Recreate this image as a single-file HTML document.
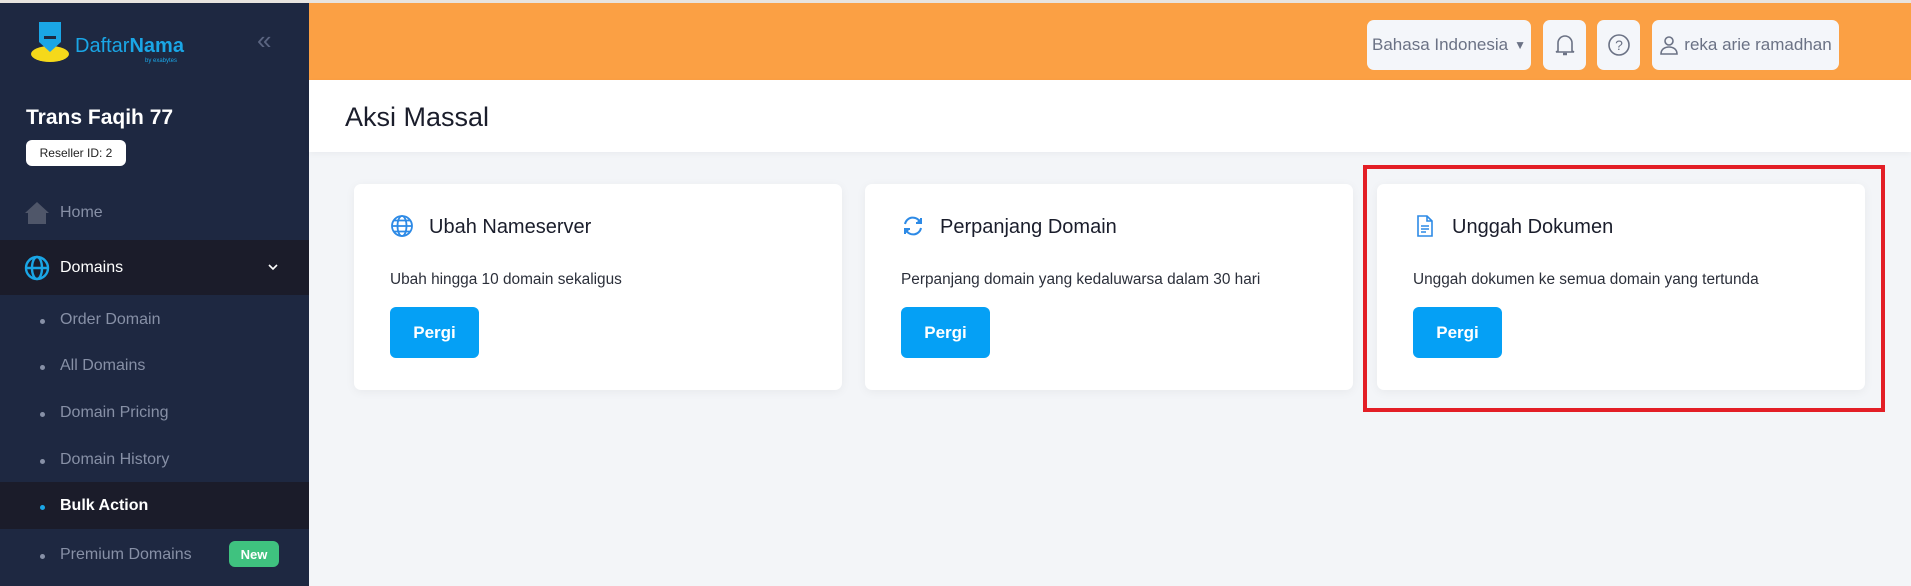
<!DOCTYPE html>
<html><head><meta charset="utf-8"><style>
*{box-sizing:border-box;margin:0;padding:0}
body{width:1911px;height:586px;overflow:hidden;font-family:"Liberation Sans",sans-serif;background:#f3f5f8;position:relative}
.topline{position:absolute;left:0;top:0;width:1911px;height:3px;background:#e8e4df}
.sb{position:absolute;left:0;top:3px;width:309px;height:583px;background:#1e2841}
.hdr{position:absolute;left:309px;top:3px;width:1602px;height:77px;background:#fba044}
.tbar{position:absolute;left:309px;top:80px;width:1602px;height:72px;background:#fff;box-shadow:0 2px 6px rgba(0,0,0,.04)}
.tbar h1{position:absolute;left:36px;top:22px;font-size:27px;font-weight:normal;color:#1a1d2b}
.hb{position:absolute;top:17px;height:50px;background:#f4f6fa;border-radius:7px;color:#6b7285;font-size:17px;display:flex;align-items:center;justify-content:center;white-space:nowrap}
.card{position:absolute;top:184px;width:488px;height:206px;background:#fff;border-radius:7px;box-shadow:0 2px 10px rgba(0,0,0,.05)}
.card .ic{position:absolute;left:36px;top:30px}
.card h3{position:absolute;left:75px;top:32px;font-size:20px;font-weight:normal;color:#1a1d2b;white-space:nowrap}
.card p{position:absolute;left:36px;top:87px;font-size:15.4px;color:#2b2f3a;white-space:nowrap}
.card .btn{position:absolute;left:36px;top:123px;width:89px;height:51px;background:#05a0f5;border-radius:6px;color:#fff;font-weight:bold;font-size:17px;display:flex;align-items:center;justify-content:center}
.red{position:absolute;left:1363px;top:165px;width:522px;height:247px;border:4px solid #e31e26}
.nav{position:absolute;left:0;width:309px;font-size:16px;color:#8790a6}
.sub{position:absolute;left:60px;font-size:16px;color:#8790a6}
.dot{position:absolute;left:40px;width:5px;height:5px;border-radius:50%;background:#8790a6}
</style></head><body>
<div class="topline"></div>
<div class="sb">
  <svg style="position:absolute;left:30px;top:17px" width="42" height="44" viewBox="0 0 42 44"><ellipse cx="20" cy="34" rx="19" ry="8" fill="#f5d91a"/><path d="M9 2h22v20l-11 10-11-10z" fill="#1aa6e6"/><rect x="14" y="16" width="12" height="3" fill="#1e2841"/></svg>
  <div style="position:absolute;left:75px;top:32px;font-size:20px;color:#1aa6e6;white-space:nowrap">Daftar<b>Nama</b></div>
  <div style="position:absolute;left:145px;top:55px;font-size:6px;color:#1aa6e6">by exabytes</div>
  <div style="position:absolute;left:257px;top:22px;font-size:26px;color:#5a6480">«</div>
  <div style="position:absolute;left:26px;top:103px;font-size:21px;font-weight:bold;color:#fff">Trans Faqih 77</div>
  <div style="position:absolute;left:26px;top:137px;width:100px;height:26px;background:#fff;border-radius:6px;font-size:12px;color:#222;display:flex;align-items:center;justify-content:center">Reseller ID: 2</div>
  <svg style="position:absolute;left:24px;top:198px" width="26" height="24" viewBox="0 0 26 24"><path d="M13 1L1 12h3v11h18V12h3z" fill="#4f5669"/></svg>
  <div class="nav" style="top:201px;left:60px">Home</div>
  <div style="position:absolute;left:0;top:237px;width:309px;height:55px;background:#1b1c2a"></div>
  <svg style="position:absolute;left:24px;top:252px" width="26" height="26" viewBox="0 0 26 26" fill="none" stroke="#1aa6e6" stroke-width="2.4"><circle cx="13" cy="13" r="11"/><ellipse cx="13" cy="13" rx="5" ry="11"/><path d="M2 13h22"/></svg>
  <div class="nav" style="top:256px;left:60px;color:#fff">Domains</div>
  <svg style="position:absolute;left:267px;top:260px" width="12" height="8" viewBox="0 0 12 8" fill="none" stroke="#fff" stroke-width="1.6"><path d="M2 2l4 4 4-4"/></svg>
  <div class="dot" style="top:316px"></div><div class="sub" style="top:308px">Order Domain</div>
  <div class="dot" style="top:362px"></div><div class="sub" style="top:354px">All Domains</div>
  <div class="dot" style="top:409px"></div><div class="sub" style="top:401px">Domain Pricing</div>
  <div class="dot" style="top:456px"></div><div class="sub" style="top:448px">Domain History</div>
  <div style="position:absolute;left:0;top:479px;width:309px;height:47px;background:#1b1c2a"></div>
  <div class="dot" style="top:502px;background:#1aa6e6"></div><div class="sub" style="top:494px;color:#fff;font-weight:bold">Bulk Action</div>
  <div class="dot" style="top:551px"></div><div class="sub" style="top:543px">Premium Domains</div>
  <div style="position:absolute;left:229px;top:538px;width:50px;height:26px;background:#3fc27f;border-radius:6px;color:#fff;font-weight:bold;font-size:13px;display:flex;align-items:center;justify-content:center">New</div>
</div>
<div class="hdr">
  <div class="hb" style="left:1058px;width:164px">Bahasa Indonesia <span style="font-size:12px;margin-left:6px">▼</span></div>
  <div class="hb" style="left:1234px;width:43px"><svg width="22" height="24" viewBox="0 0 22 24" fill="none" stroke="#6b7285" stroke-width="1.6"><path d="M4 18V10a7 7 0 0114 0v8l2 1H2z"/><path d="M9 21h4" stroke-width="2.5"/></svg></div>
  <div class="hb" style="left:1288px;width:43px"><svg width="24" height="24" viewBox="0 0 24 24" fill="none" stroke="#6b7285" stroke-width="1.6"><circle cx="12" cy="12" r="10"/><text x="12" y="17" font-size="14" text-anchor="middle" fill="#6b7285" stroke="none" font-family="Liberation Sans">?</text></svg></div>
  <div class="hb" style="left:1343px;width:187px"><svg width="20" height="20" viewBox="0 0 20 20" fill="none" stroke="#6b7285" stroke-width="1.6" style="margin-right:5px"><circle cx="10" cy="6" r="4"/><path d="M2 19c0-5 4-7 8-7s8 2 8 7z"/></svg>reka arie ramadhan</div>
</div>
<div class="tbar"><h1>Aksi Massal</h1></div>
<div class="card" style="left:354px"><svg class="ic" width="24" height="24" viewBox="0 0 24 24" fill="none" stroke="#2d8ae6" stroke-width="1.8"><circle cx="12" cy="12" r="10"/><ellipse cx="12" cy="12" rx="4.5" ry="10"/><path d="M2 12h20M4 6.5h16M4 17.5h16"/></svg><h3>Ubah Nameserver</h3><p>Ubah hingga 10 domain sekaligus</p><div class="btn">Pergi</div></div>
<div class="card" style="left:865px"><svg class="ic" width="24" height="24" viewBox="0 0 24 24" fill="none" stroke="#2d8ae6" stroke-width="2"><path d="M4 10a8 8 0 0115-2"/><path d="M20 14a8 8 0 01-15 2"/><path d="M20 4v5h-5M4 20v-5h5" fill="#2d8ae6"/></svg><h3>Perpanjang Domain</h3><p>Perpanjang domain yang kedaluwarsa dalam 30 hari</p><div class="btn">Pergi</div></div>
<div class="card" style="left:1377px"><svg class="ic" width="24" height="24" viewBox="0 0 24 24" fill="none" stroke="#2d8ae6" stroke-width="1.6"><path d="M5 2h9l5 5v15H5z"/><path d="M14 2v5h5M8 12h8M8 15h8M8 18h5"/></svg><h3>Unggah Dokumen</h3><p>Unggah dokumen ke semua domain yang tertunda</p><div class="btn">Pergi</div></div>
<div class="red"></div>
</body></html>
